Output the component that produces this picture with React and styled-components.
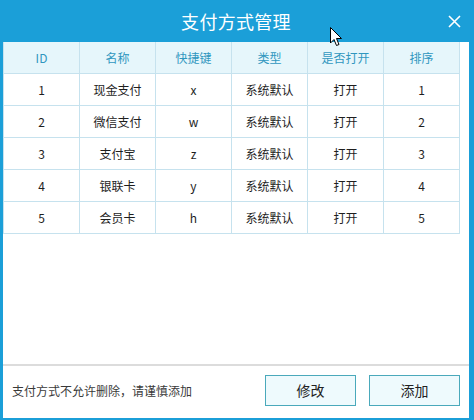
import React from "react";
import styled, { createGlobalStyle } from "styled-components";

const Global = createGlobalStyle`
  html, body { margin: 0; padding: 0; background: #ffffff; }
  body { font-family: "Noto Sans CJK SC", "Noto Sans", sans-serif; }
`;

const Window = styled.div`
  position: relative;
  width: 474px;
  height: 420px;
  box-sizing: border-box;
  background: #1b9fd8;
  padding: 0 5px 2px 3px;
  display: flex;
  flex-direction: column;
`;

const TitleBar = styled.div`
  height: 42px;
  flex: none;
  position: relative;
  display: flex;
  align-items: center;
  justify-content: center;
  color: #ffffff;
  font-size: 18px;
  letter-spacing: 0.3px;
  padding-bottom: 1px;
  box-sizing: border-box;
`;

const CloseButton = styled.button`
  position: absolute;
  right: 8px;
  top: 14px;
  width: 14px;
  height: 14px;
  padding: 0;
  border: 0;
  background: none;
  display: flex;
  align-items: center;
  justify-content: center;
`;

const Body = styled.div`
  flex: 1;
  background: #ffffff;
  display: flex;
  flex-direction: column;
  min-height: 0;
`;

const Grid = styled.table`
  width: 457px;
  table-layout: fixed;
  border-collapse: collapse;
  font-size: 12px;
  color: #1e1e1e;
`;

const HeadCell = styled.th`
  height: 31px;
  padding: 0;
  font-weight: normal;
  background: #e6f6fb;
  color: #3097bf;
  border: 1px solid #c6e2ee;
  border-top: 0;
  text-align: center;
`;

const Cell = styled.td`
  height: 31px;
  padding: 0;
  border: 1px solid #c6e2ee;
  text-align: center;
`;

const Spacer = styled.div`
  flex: 1;
`;

const Footer = styled.div`
  height: 54px;
  box-sizing: border-box;
  border-top: 2px solid #dcdcdc;
  display: flex;
  align-items: center;
  padding: 0 9px 4px 9px;
  gap: 13px;
`;

const Notice = styled.div`
  flex: 1;
  font-size: 12px;
  color: #3a3a3a;
`;

const ActionButton = styled.button`
  width: 91px;
  height: 31px;
  box-sizing: border-box;
  border: 1px solid #4aa9bb;
  background: #eefafd;
  color: #222222;
  font-family: inherit;
  font-size: 14px;
  padding: 0;
`;

const Pointer = styled.svg`
  position: absolute;
  left: 330px;
  top: 27px;
`;

const columns = ["ID", "名称", "快捷键", "类型", "是否打开", "排序"];

const rows = [
  { id: 1, name: "现金支付", key: "x", type: "系统默认", open: "打开", order: 1 },
  { id: 2, name: "微信支付", key: "w", type: "系统默认", open: "打开", order: 2 },
  { id: 3, name: "支付宝", key: "z", type: "系统默认", open: "打开", order: 3 },
  { id: 4, name: "银联卡", key: "y", type: "系统默认", open: "打开", order: 4 },
  { id: 5, name: "会员卡", key: "h", type: "系统默认", open: "打开", order: 5 },
];

export default function App() {
  return (
    <>
      <Global />
      <Window>
        <TitleBar>
          支付方式管理
          <CloseButton aria-label="关闭">
            <svg width="13" height="13" viewBox="0 0 13 13">
              <path d="M1 1 L12 12 M12 1 L1 12" stroke="#ffffff" strokeWidth="1.6" />
            </svg>
          </CloseButton>
        </TitleBar>
        <Body>
          <Grid>
            <thead>
              <tr>
                {columns.map((c) => (
                  <HeadCell key={c}>{c}</HeadCell>
                ))}
              </tr>
            </thead>
            <tbody>
              {rows.map((r) => (
                <tr key={r.id}>
                  <Cell>{r.id}</Cell>
                  <Cell>{r.name}</Cell>
                  <Cell>{r.key}</Cell>
                  <Cell>{r.type}</Cell>
                  <Cell>{r.open}</Cell>
                  <Cell>{r.order}</Cell>
                </tr>
              ))}
            </tbody>
          </Grid>
          <Spacer />
          <Footer>
            <Notice>支付方式不允许删除，请谨慎添加</Notice>
            <ActionButton>修改</ActionButton>
            <ActionButton>添加</ActionButton>
          </Footer>
        </Body>
        <Pointer width="13" height="20" viewBox="0 0 13 20">
          <path
            d="M0.5 0.5 L0.5 16 L4 12.5 L6.5 18.5 L9 17.5 L6.5 11.5 L11.5 11.5 Z"
            fill="#ffffff"
            stroke="#000000"
            strokeWidth="1"
            strokeLinejoin="round"
          />
        </Pointer>
      </Window>
    </>
  );
}
